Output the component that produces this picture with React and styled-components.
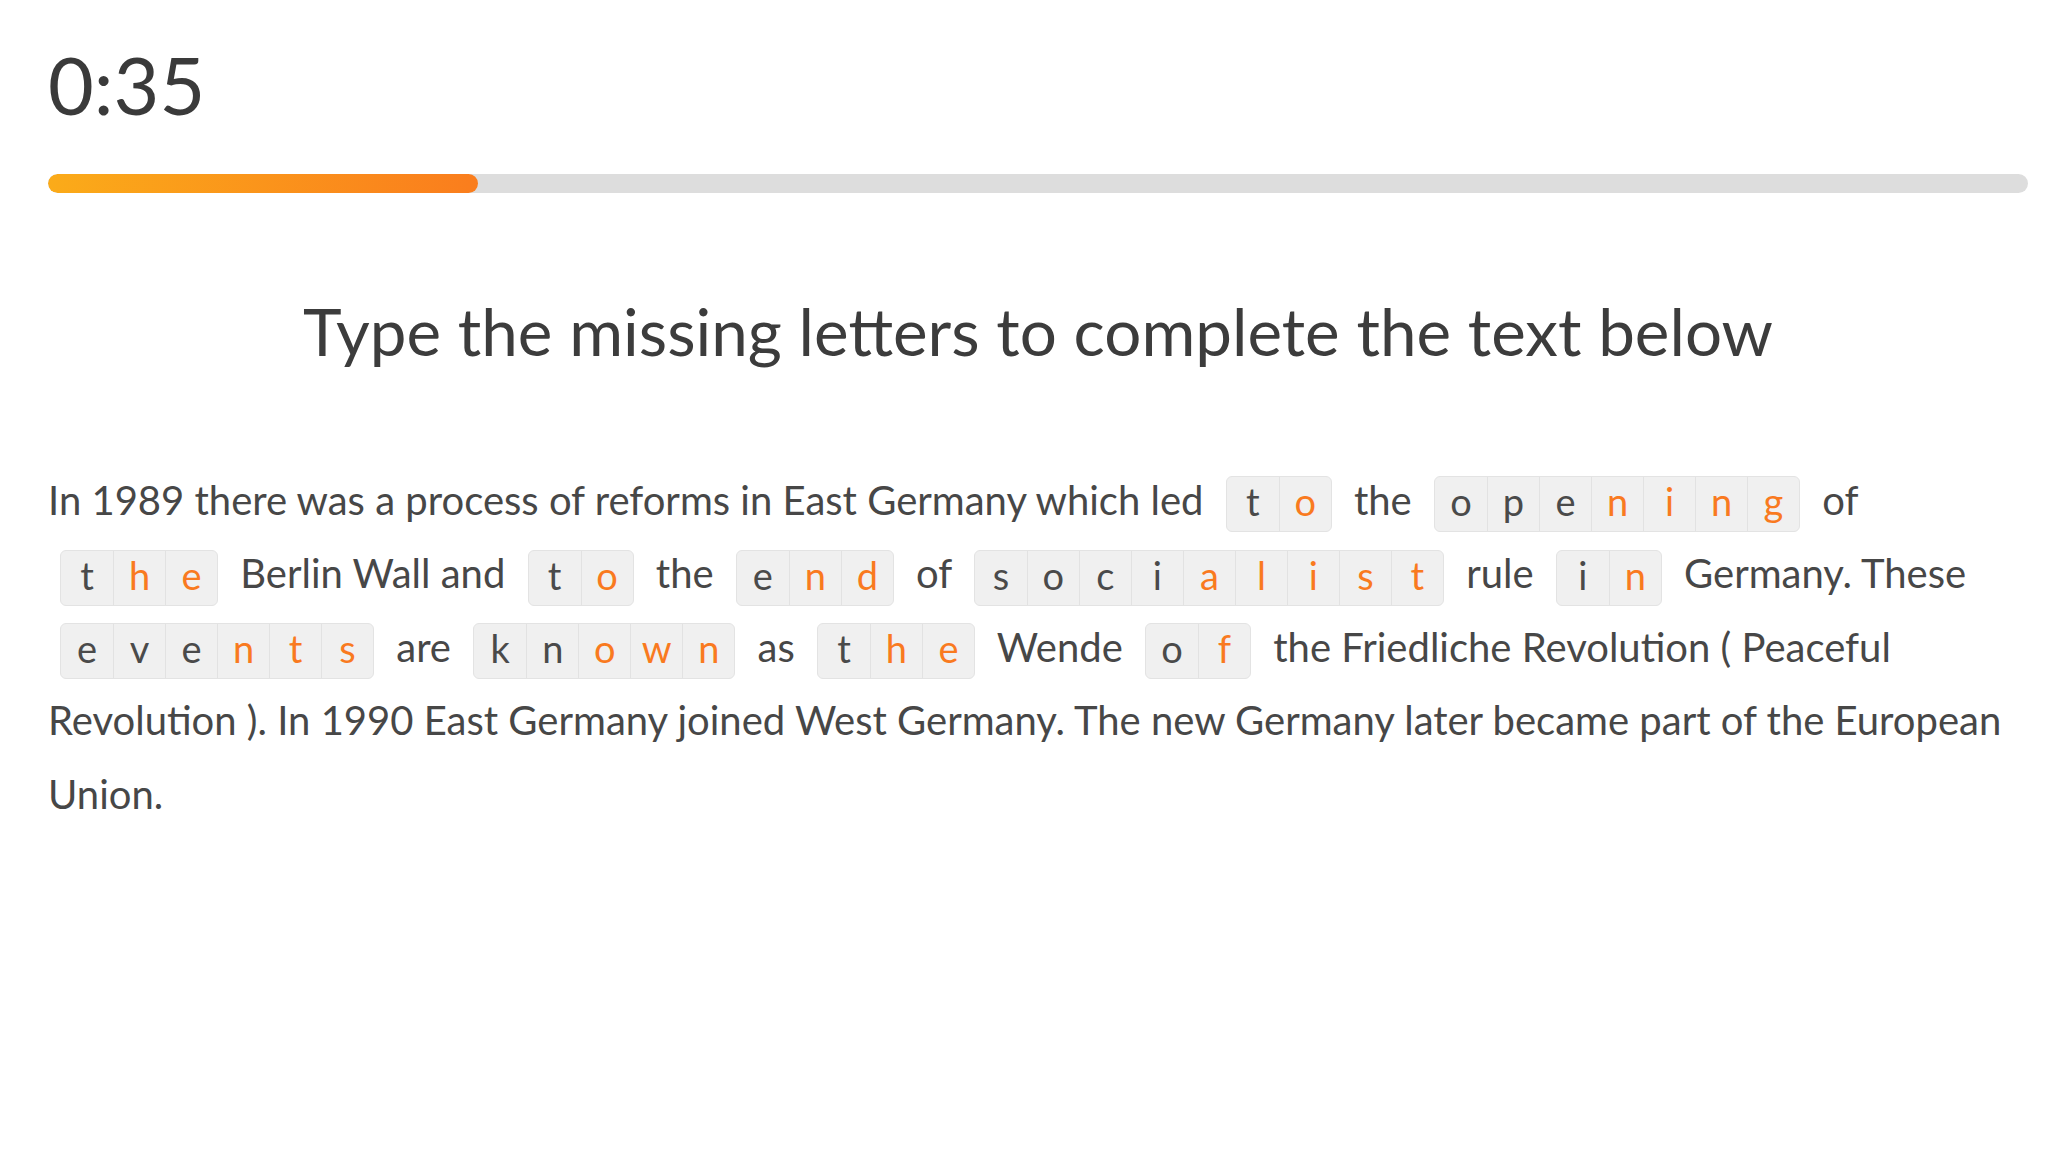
import React from 'react'
import styled, { createGlobalStyle } from 'styled-components'

const GlobalStyle = createGlobalStyle`
    body {
        margin: 0;
        background: #ffffff;
        font-family: Lato, 'Open Sans', sans-serif;
        color: #444444;
    }
`

const Page = styled.div`
    padding: 45px 20px 0 48px;
`

const Timer = styled.div`
    font-size: 79px;
    line-height: 1;
    color: #3a3a3a;
    height: 80px;
`

const Track = styled.div`
    margin-top: 49px;
    height: 19px;
    border-radius: 10px;
    background: #dddddd;
    overflow: hidden;
`

const Fill = styled.div`
    height: 100%;
    border-radius: 10px;
    background: linear-gradient(90deg, #fbab19, #fa7d1d);
`

const Title = styled.h1`
    margin: 105px 0 0;
    text-align: center;
    font-weight: 400;
    font-size: 65.5px;
    line-height: 1;
    color: #3c3c3c;
`

const Passage = styled.p`
    margin: 100px 0 0;
    font-size: 40px;
    line-height: 73.5px;
    color: #474747;
`

const WordBox = styled.span`
    display: inline-flex;
    vertical-align: middle;
    margin: 0 12px;
    height: 54px;
    border: 1px solid #e3e3e3;
    border-radius: 6px;
    background: #f0f0f0;
    overflow: hidden;
`

const Cell = styled.span`
    width: 52px;
    display: flex;
    align-items: center;
    justify-content: center;
    font-size: 38px;
    line-height: 1;
    color: ${(p) => (p.$missing ? '#f97a1f' : '#4a4a4a')};
    border-left: ${(p) => (p.$first ? 'none' : '1px solid #e2e2e2')};
    padding-bottom: 6px;
    box-sizing: border-box;
`

// given letters first, then the ones the player typed in orange
const W = (given, missing) => ({ given, missing })

const passage = [
    'In 1989 there was a process of reforms in East Germany which led',
    W('t', 'o'),
    'the',
    W('ope', 'ning'),
    'of',
    W('t', 'he'),
    'Berlin Wall and',
    W('t', 'o'),
    'the',
    W('e', 'nd'),
    'of',
    W('soci', 'alist'),
    'rule',
    W('i', 'n'),
    'Germany. These',
    W('eve', 'nts'),
    'are',
    W('kn', 'own'),
    'as',
    W('t', 'he'),
    'Wende',
    W('o', 'f'),
    'the Friedliche Revolution ( Peaceful Revolution ). In 1990 East Germany joined West Germany. The new Germany later became part of the European Union.',
]

function Word({ word }) {
    const letters = [
        ...word.given.split('').map((ch) => ({ ch, missing: false })),
        ...word.missing.split('').map((ch) => ({ ch, missing: true })),
    ]
    return (
        <WordBox>
            {letters.map((l, i) => (
                <Cell key={i} $first={i === 0} $missing={l.missing}>
                    {l.ch}
                </Cell>
            ))}
        </WordBox>
    )
}

export default function App() {
    const progress = 21.7
    return (
        <Page>
            <GlobalStyle />
            <Timer>0:35</Timer>
            <Track>
                <Fill style={{ width: `${progress}%` }} />
            </Track>
            <Title>Type the missing letters to complete the text below</Title>
            <Passage>
                {passage.map((part, i) =>
                    typeof part === 'string' ? (
                        <React.Fragment key={i}>{part} </React.Fragment>
                    ) : (
                        <React.Fragment key={i}>
                            <Word word={part} />{' '}
                        </React.Fragment>
                    )
                )}
            </Passage>
        </Page>
    )
}
